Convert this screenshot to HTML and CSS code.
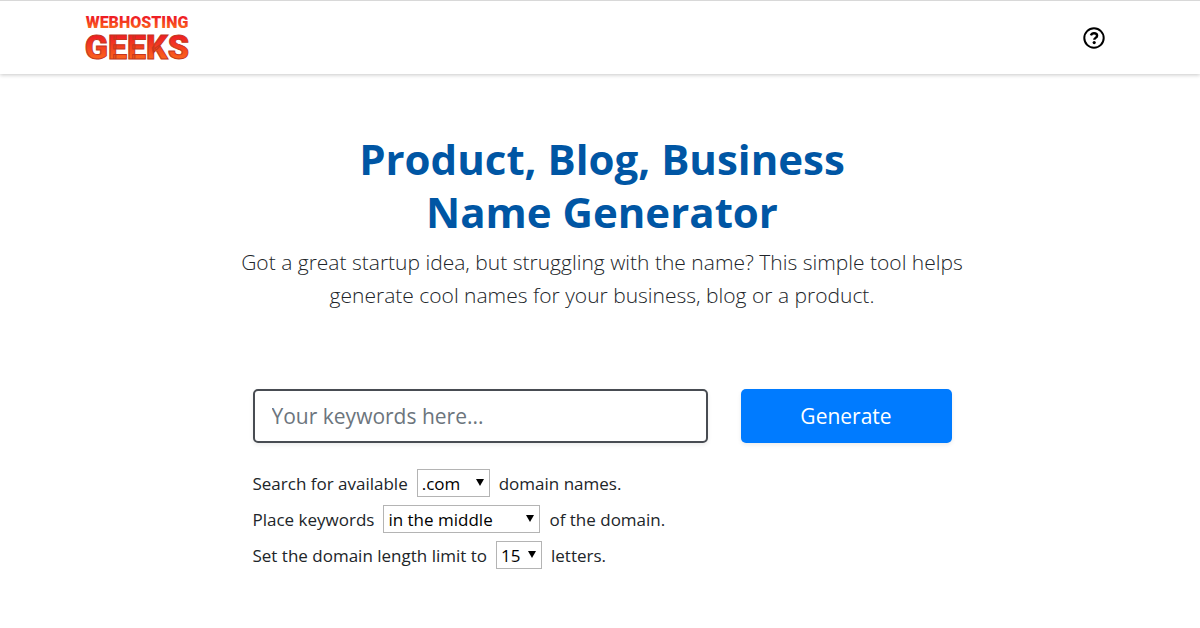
FILE: index.html
```html
<!DOCTYPE html>
<html lang="en">
<head>
    <meta charset="utf-8">
    <meta name="viewport" content="width=device-width, initial-scale=1">
    <title>Product, Blog, Business Name Generator</title>
    <link rel="stylesheet" href="styles.css">
</head>
<body>
    <header class="header">
        <a class="logo" href="index.html" aria-label="WebHosting Geeks">
            <svg width="108" height="56" viewBox="0 0 108 56">
                <defs>
                    <linearGradient id="fire" x1="0" y1="0" x2="0" y2="1">
                        <stop offset="0.2" stop-color="#ee1c25"/>
                        <stop offset="0.8" stop-color="#fb641c"/>
                    </linearGradient>
                </defs>
                <text class="logo-top" x="54" y="18" text-anchor="middle">WEBHOSTING</text>
                <text class="logo-main" x="54" y="49" text-anchor="middle">GEEKS</text>
            </svg>
        </a>
        <a class="help" href="#help" aria-label="Help">
            <svg width="22" height="22" viewBox="0 0 22 22" fill="none" stroke="#000">
                <circle cx="11" cy="11" r="9.7" stroke-width="2"/>
                <path d="M7.9 8.4C8.5 6.8 9.6 6.2 11 6.2c1.8 0 3.1 1 3.1 2.5 0 2.2-2.8 2.1-2.8 4" stroke-width="2.4"/>
                <circle cx="11.2" cy="15.6" r="1.6" fill="#000" stroke="none"/>
            </svg>
        </a>
    </header>

    <main class="container">
        <h1>Product, Blog, Business<br>Name Generator</h1>
        <p class="lead">Got a great startup idea, but struggling with the name? This simple tool helps<br>generate cool names for your business, blog or a product.</p>

        <form class="generator">
            <div class="search">
                <input type="text" name="keywords" placeholder="Your keywords here..." aria-label="Your keywords">
                <button type="submit">Generate</button>
            </div>
            <div class="option">
                <label for="tld">Search for available</label>
                <span class="select tld">
                    <select id="tld" name="tld">
                        <option>.com</option>
                        <option>.net</option>
                        <option>.org</option>
                    </select>
                </span>
                <span>domain names.</span>
            </div>
            <div class="option">
                <label for="place">Place keywords</label>
                <span class="select place">
                    <select id="place" name="place">
                        <option>in the middle</option>
                        <option>at the beginning</option>
                        <option>at the end</option>
                    </select>
                </span>
                <span>of the domain.</span>
            </div>
            <div class="option">
                <label for="limit">Set the domain length limit to</label>
                <span class="select limit">
                    <select id="limit" name="limit">
                        <option>15</option>
                        <option>20</option>
                        <option>25</option>
                    </select>
                </span>
                <span>letters.</span>
            </div>
        </form>
    </main>
</body>
</html>
```
FILE: styles.css
```css
* {
    box-sizing: border-box;
}

body {
    margin: 0;
    font-family: "Open Sans", "Noto Sans", sans-serif;
    font-size: 17px;
    color: #212529;
    background-color: #fff;
}

.header {
    display: flex;
    justify-content: space-between;
    align-items: center;
    height: 74px;
    padding: 0 95px 0 83px;
    border-top: 1px solid #d8d8d8;
    box-shadow: 0 1px 4px rgba(0, 0, 0, 0.22);
}

.logo svg,
.help svg {
    display: block;
}

.logo text {
    font-family: Roboto, "Liberation Sans", sans-serif;
    font-weight: 900;
    fill: url(#fire);
    stroke: #c4371c;
}

.logo-top {
    font-size: 16px;
    stroke-width: 0;
}

.logo-main {
    font-size: 34px;
    stroke-width: 1px;
}

.container {
    max-width: 717px;
    margin: 0 auto;
    padding: 58px 7px 0 11px;
}

h1 {
    margin: 0;
    font-size: 42px;
    line-height: 53px;
    font-weight: bold;
    text-align: center;
    color: #0056a4;
}

.lead {
    margin: 8px -12px 0;
    font-size: 21px;
    line-height: 33px;
    font-weight: 300;
    text-align: center;
}

.generator {
    margin-top: 77px;
}

.search {
    display: flex;
    gap: 33px;
    margin-bottom: 22px;
}

.search input {
    flex: 1;
    min-width: 0;
    height: 54px;
    padding: 0 17px;
    font-family: inherit;
    font-size: 21px;
    color: #495057;
    border: 2px solid #484c52;
    border-radius: 5px;
    box-shadow: 0 2px 4px rgba(0, 0, 0, 0.08);
}

.search input::placeholder {
    color: #6c757d;
}

.search button {
    flex: 0 0 211px;
    height: 54px;
    font-family: inherit;
    font-size: 21px;
    color: #fff;
    background-color: #007bff;
    border: 0;
    border-radius: 5px;
    box-shadow: 0 2px 4px rgba(0, 0, 0, 0.08);
}

.option {
    display: flex;
    align-items: center;
    gap: 9px;
    height: 36px;
}

.select {
    position: relative;
}

/* dropdown arrow */
.select::after {
    content: "";
    position: absolute;
    top: 10px;
    right: 6px;
    border: 4px solid transparent;
    border-top: 7px solid #000;
    border-bottom: 0;
    pointer-events: none;
}

.select select {
    display: block;
    width: 100%;
    height: 28px;
    padding: 0 4px;
    font-family: inherit;
    font-size: 17px;
    color: #000;
    background-color: #fff;
    border: 1px solid #b4b4b4;
    border-radius: 0;
    appearance: none;
}

.tld {
    width: 73px;
}

.place {
    width: 157px;
}

.limit {
    width: 46px;
}
```
